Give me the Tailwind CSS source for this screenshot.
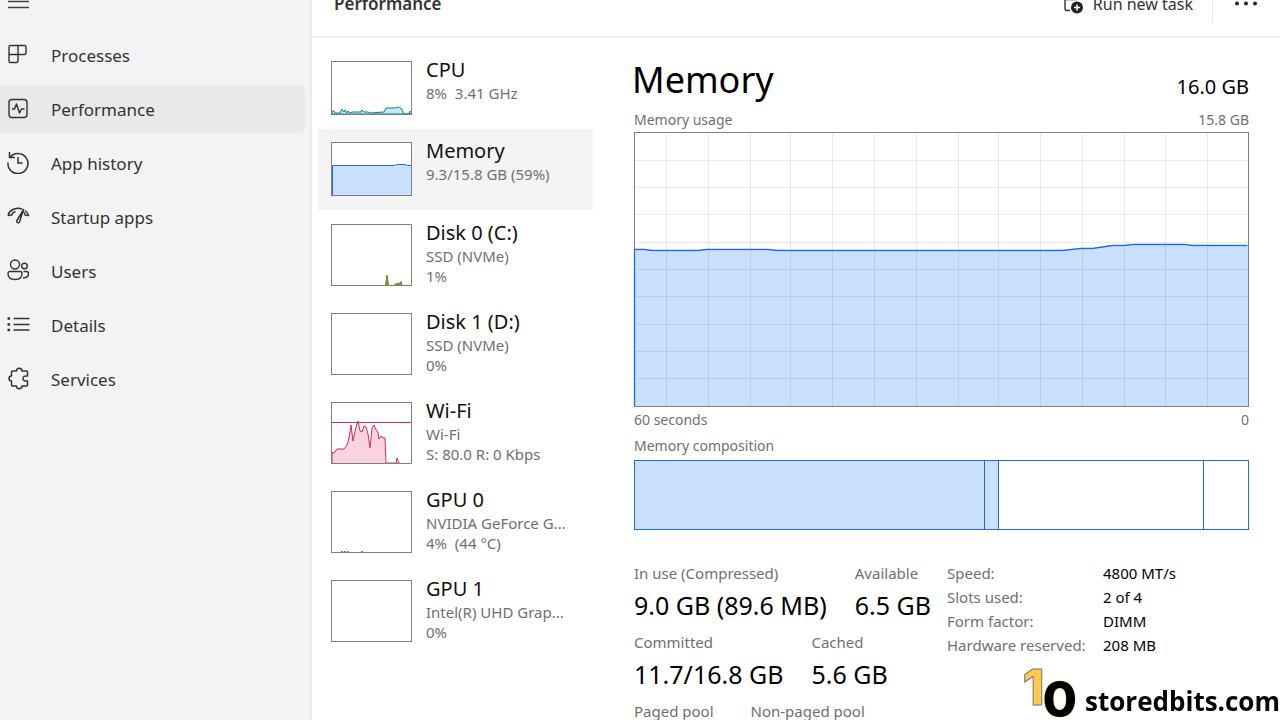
<!DOCTYPE html>
<html lang="en">
<head>
  <meta charset="UTF-8">
  <meta name="viewport" content="width=device-width, initial-scale=1.0">
  <title>Task Manager - Performance</title>
  <script src="https://cdn.jsdelivr.net/npm/@tailwindcss/browser@4"></script>
</head>
<body class="h-screen overflow-hidden bg-white font-['Noto_Sans','Open_Sans',sans-serif] text-[#1b1b1b]">
  <!-- The window is scrolled so that its title row is partly cut off -->
  <div class="flex min-h-[calc(100vh+29px)] -mt-[29px]">

    <!-- Sidebar -->
    <nav class="w-[312px] shrink-0 bg-[#f3f3f3] border-r-2 border-[#ebebeb] text-[17px] text-[#333]" aria-label="Main">
      <button class="flex items-center h-[66px] pl-2" aria-label="Toggle navigation">
        <svg class="w-[22px] h-[22px]" viewBox="0 0 22 22" fill="none" stroke="#444" stroke-width="1.5"><path d="M0 2.5h21M0 8.500h21M0 14.500h21"/></svg>
      </button>
      <ul class="flex flex-col gap-[6px] -mt-[6px] pr-[5px]">
        <li>
          <a href="#processes" class="flex items-center gap-[21px] h-12 pl-[7px] pt-[2px]">
            <svg class="w-[23px] h-[23px] -mt-1" viewBox="0 0 23 23" fill="none" stroke="#333" stroke-width="1.4"><path d="M3.500 2.500h14a1.500 1.500 0 0 1 1.500 1.500v6a1.500 1.500 0 0 1-1.500 1.500h-15.500M11 2.500v15.500a1.500 1.500 0 0 1-1.500 1.500h-6a1.500 1.500 0 0 1-1.500-1.500v-14a1.500 1.500 0 0 1 1.500-1.500"/></svg>
            Processes
          </a>
        </li>
        <li>
          <a href="#performance" aria-current="page" class="flex items-center gap-[21px] h-12 pl-[7px] pt-[2px] rounded-r-md bg-[#e9e9e9]">
            <svg class="w-[23px] h-[23px] -mt-1" viewBox="0 0 23 23" fill="none" stroke="#333" stroke-width="1.4" stroke-linejoin="round"><rect x="2" y="2.500" width="18" height="18" rx="3"/><path d="M5 12h2.500l2-5 3 9 2-4h3"/></svg>
            Performance
          </a>
        </li>
        <li>
          <a href="#history" class="flex items-center gap-[21px] h-12 pl-[7px] pt-[2px]">
            <svg class="w-[23px] h-[23px] -mt-1" viewBox="0 0 23 23" fill="none" stroke="#333" stroke-width="1.5"><path d="M2.500 1v5.500h5.500M3 6.500a10 10 0 1 1-2 5M11 6v6h4.500"/></svg>
            App history
          </a>
        </li>
        <li>
          <a href="#startup" class="flex items-center gap-[21px] h-12 pl-[7px] pt-[2px]">
            <svg class="w-[23px] h-[23px] -mt-1" viewBox="0 0 23 23" fill="none" stroke="#333" stroke-width="1.5" stroke-linejoin="round"><path d="M1 10.500q1-4 4-5.500 5-3 10-1M1 10.500l4-.500q0-2.500 3.500-3.500M18 5.500q3 2 3.500 5l-3.500-.500q0-2-1.500-3M16.500 4.500l-4 12.500a1.500 1.500 0 0 1-2.800-1z"/></svg>
            Startup apps
          </a>
        </li>
        <li>
          <a href="#users" class="flex items-center gap-[21px] h-12 pl-[7px] pt-[2px]">
            <svg class="w-[23px] h-[23px] -mt-1" viewBox="0 0 23 23" fill="none" stroke="#333" stroke-width="1.4"><circle cx="8" cy="5.500" r="4.500"/><circle cx="17.500" cy="7" r="2.800"/><path d="M3 12.500h10a2 2 0 0 1 2 2q0 6-7 6t-7-6a2 2 0 0 1 2-2zM16.500 12.500h3a2 2 0 0 1 2 2q0 4.500-5.500 4.500"/></svg>
            Users
          </a>
        </li>
        <li>
          <a href="#details" class="flex items-center gap-[21px] h-12 pl-[7px] pt-[2px]">
            <svg class="w-[23px] h-[23px] -mt-1" viewBox="0 0 23 23" fill="none" stroke="#333" stroke-width="1.5"><path d="M6.500 5.500h16M6.500 11.500h16M6.500 17h16"/><path stroke-width="2.600" d="M.500 5.500h2.600M.500 11.500h2.600M.500 17h2.600"/></svg>
            Details
          </a>
        </li>
        <li>
          <a href="#services" class="flex items-center gap-[21px] h-12 pl-[7px] pt-[2px]">
            <svg class="w-[23px] h-[23px] -mt-1" viewBox="0 0 23 23" fill="none" stroke="#333" stroke-width="1.5" stroke-linejoin="round"><path d="M5.500 4h4q0-2.700 2.700-2.700T15 4h4.500a1 1 0 0 1 1 1v4q-4.500-.500-4.500 2.500t4.500 2.500v4a1 1 0 0 1-1 1h-4.500q0 2.700-2.800 2.700T9.500 19h-4a1 1 0 0 1-1-1v-4q-2.500 0-2.500-2.500t2.500-2.500v-4a1 1 0 0 1 1-1z"/></svg>
            Services
          </a>
        </li>
      </ul>
    </nav>

    <main class="flex-1 min-w-0 flex flex-col">
      <!-- Title row -->
      <header class="flex items-center h-[67px] pl-[22px] pr-[22px] border-b-2 border-[#efefef]">
        <h1 class="text-[17px] font-semibold text-[#333]">Performance</h1>
        <button class="ml-auto flex items-center gap-[10px] text-[16px] text-[#333]">
          <svg class="w-[22px] h-[22px]" viewBox="0 0 22 22" fill="none"><path stroke="#333" stroke-width="1.400" d="M9 17.500h-3a2 2 0 0 1-2-2v-11a2 2 0 0 1 2-2h9a2 2 0 0 1 2 2v2M4 6.500h12"/><circle cx="16" cy="14.500" r="6" fill="#222"/><path stroke="#fff" stroke-width="1.500" d="M13 14.500h6M16 11.500v6"/></svg>
          Run new task
        </button>
        <span class="w-px h-9 ml-[19px] mr-[21px] bg-[#e8e8e8]"></span>
        <button aria-label="More options">
          <svg class="w-6 h-2" viewBox="0 0 24 8" fill="#222"><circle cx="3" cy="3.500" r="2"/><circle cx="12" cy="3.500" r="2"/><circle cx="21" cy="3.500" r="2"/></svg>
        </button>
      </header>

      <div class="flex pl-[6px] pr-[31px] pt-[10px]">
        <!-- Resource list -->
        <div class="w-[275px] shrink-0 flex flex-col text-left text-[15px] leading-5 text-[#707070]">
          <button class="flex gap-[14px] h-[81px] px-[13px] pt-[13px] text-left">
            <svg class="w-[81px] h-[54px] shrink-0 border border-[#808080]" viewBox="0 0 79 52"><path d="M0 52v-3l2 0 1 2h5l2-4 2 3 1-2 2 3 1-2 2 2 2-1h9l1-2 2 2h4l2 1 14-1 2-4h9l3-1 3 1 3 6h5l1-3v3z" fill="#c2e9f2" stroke="#11829b"/></svg>
            <span class="min-w-0 -mt-1">
              <span class="block text-[20px] leading-[26px] text-[#111]">CPU</span>
              <span class="block">8%&nbsp; 3.41 GHz</span>
            </span>
          </button>
          <button class="flex gap-[14px] h-[81px] px-[13px] pt-[13px] text-left bg-[#f4f4f4]">
            <svg class="w-[81px] h-[54px] shrink-0 border border-[#808080] bg-white" viewBox="0 0 79 52"><path d="M.5 53V22.500h62l2-1h9l2 1h5v31" fill="#c9dffe" stroke="#1f69e2"/></svg>
            <span class="min-w-0 -mt-1">
              <span class="block text-[20px] leading-[26px] text-[#111]">Memory</span>
              <span class="block">9.3/15.8 GB (59%)</span>
            </span>
          </button>
          <button class="flex gap-[14px] h-[89px] px-[13px] pt-[14px] text-left">
            <svg class="w-[81px] h-[62px] shrink-0 border border-[#808080]" viewBox="0 0 79 60"><path d="M53.500 60l1.500-10 1.500 10zM63 60v-1l4-.5 2-2 1 3.500z" fill="#7da03a" stroke="#5f8a1c"/></svg>
            <span class="min-w-0 -mt-1">
              <span class="block text-[20px] leading-[26px] text-[#111]">Disk 0 (C:)</span>
              <span class="block">SSD (NVMe)</span>
              <span class="block">1%</span>
            </span>
          </button>
          <button class="flex gap-[14px] h-[89px] px-[13px] pt-[14px] text-left">
            <svg class="w-[81px] h-[62px] shrink-0 border border-[#808080]" viewBox="0 0 79 60"></svg>
            <span class="min-w-0 -mt-1">
              <span class="block text-[20px] leading-[26px] text-[#111]">Disk 1 (D:)</span>
              <span class="block">SSD (NVMe)</span>
              <span class="block">0%</span>
            </span>
          </button>
          <button class="flex gap-[14px] h-[89px] px-[13px] pt-[14px] text-left">
            <svg class="w-[81px] h-[62px] shrink-0 border border-[#808080]" viewBox="0 0 79 60"><path d="M0 60v-11l2 1 3-4h7l3-4 2-7 2-13 2 16 3-14 2-6 2 10 2 1 2-6 2 1 2 7 2 14 2-20 2-3 2 5 2 2 1 7 2-3 2 2 2 0 1 25h10l1-5 2 5" fill="#f9d3dd" stroke="#c9305f" stroke-linejoin="round"/><path d="M0 19.500h79" stroke="#c9305f"/></svg>
            <span class="min-w-0 -mt-1">
              <span class="block text-[20px] leading-[26px] text-[#111]">Wi-Fi</span>
              <span class="block">Wi-Fi</span>
              <span class="block">S: 80.0 R: 0 Kbps</span>
            </span>
          </button>
          <button class="flex gap-[14px] h-[89px] px-[13px] pt-[14px] text-left">
            <svg class="w-[81px] h-[62px] shrink-0 border border-[#808080]" viewBox="0 0 79 60"><path d="M9 59.500h2M12 59.500h2M15 59.500h2M29 59.500h2" stroke="#9a5fd0"/></svg>
            <span class="min-w-0 -mt-1">
              <span class="block text-[20px] leading-[26px] text-[#111]">GPU 0</span>
              <span class="block">NVIDIA GeForce G...</span>
              <span class="block">4%&nbsp; (44 °C)</span>
            </span>
          </button>
          <button class="flex gap-[14px] h-[89px] px-[13px] pt-[14px] text-left">
            <svg class="w-[81px] h-[62px] shrink-0 border border-[#808080]" viewBox="0 0 79 60"></svg>
            <span class="min-w-0 -mt-1">
              <span class="block text-[20px] leading-[26px] text-[#111]">GPU 1</span>
              <span class="block">Intel(R) UHD Grap...</span>
              <span class="block">0%</span>
            </span>
          </button>
        </div>

        <!-- Memory details -->
        <section class="flex-1 min-w-0 ml-[41px] pt-[10px] text-[15px] leading-5 text-[#707070]">
          <div class="flex items-end justify-between pb-2 text-black">
            <h2 class="text-[36px] leading-[44px] -ml-[2px]">Memory</h2>
            <span class="text-[20px] leading-[30px]">16.0 GB</span>
          </div>
          <div class="flex justify-between text-[14px]"><span>Memory usage</span><span>15.8 GB</span></div>
          <svg class="block w-full h-[275px] mt-[2px] border border-[#808080] overflow-visible" viewBox="0 0 613 273" preserveAspectRatio="none" fill="none">
            <path d="M0 273V117.500h10l8 1h46l8-1h61l10 1h285l18-2 12 0 20-3h12l8-1h52l8 1h55V273z" fill="#c9dffe"/>
            <path d="M31.500 0v273M73.500 0v273M115.500 0v273M155.500 0v273M197.500 0v273M239.500 0v273M281.500 0v273M323.500 0v273M363.500 0v273M405.500 0v273M447.500 0v273M489.500 0v273M530.500 0v273M572.500 0v273M0 27.500h613M0 54.500h613M0 81.500h613M0 109.500h613M0 136.500h613M0 163.500h613M0 191.500h613M0 218.500h613M0 245.500h613" stroke="#000" stroke-opacity=".08"/>
            <path d="M-.5 273V116.500h10l8 1h46l8-1h61l10 1h285l18-2 12 0 20-3h12l8-1h52l8 1h55" stroke="#1f69e2" stroke-width="1.300"/>
          </svg>
          <div class="flex justify-between mt-[3px] text-[14px]"><span>60 seconds</span><span>0</span></div>
          <div class="mt-[6px] text-[14px]">Memory composition</div>
          <div class="flex h-[70px] mt-[4px] border border-[#1f69e2]">
            <div class="bg-[#c9dffe] border-r border-[#1f69e2]" style="width: 57.1%"></div>
            <div class="bg-[#c9dffe] border-r border-[#1f69e2]" style="width: 2.2%"></div>
            <div class="border-r border-[#1f69e2]" style="width: 33.5%"></div>
          </div>

          <div class="flex mt-[33px]">
            <div class="w-[313px] shrink-0 flex flex-col gap-y-[5px]">
              <dl class="flex gap-[28px] whitespace-nowrap">
                <div><dt>In use (Compressed)</dt><dd class="text-[25px] leading-[44px] text-black">9.0 GB (89.6 MB)</dd></div>
                <div><dt>Available</dt><dd class="text-[25px] leading-[44px] text-black">6.5 GB</dd></div>
              </dl>
              <dl class="flex gap-[28px] whitespace-nowrap">
                <div><dt>Committed</dt><dd class="text-[25px] leading-[44px] text-black">11.7/16.8 GB</dd></div>
                <div><dt>Cached</dt><dd class="text-[25px] leading-[44px] text-black">5.6 GB</dd></div>
              </dl>
              <dl class="flex gap-[37px] whitespace-nowrap">
                <div><dt>Paged pool</dt></div>
                <div><dt>Non-paged pool</dt></div>
              </dl>
            </div>
            <table class="self-start -mt-[2px] text-left leading-6 whitespace-nowrap">
              <tbody>
                <tr><th class="w-[156px] p-0 font-normal">Speed:</th><td class="p-0 text-black">4800 MT/s</td></tr>
                <tr><th class="p-0 font-normal">Slots used:</th><td class="p-0 text-black">2 of 4</td></tr>
                <tr><th class="p-0 font-normal">Form factor:</th><td class="p-0 text-black">DIMM</td></tr>
                <tr><th class="p-0 font-normal">Hardware reserved:</th><td class="p-0 text-black">208 MB</td></tr>
              </tbody>
            </table>
          </div>
        </section>
      </div>
    </main>
  </div>

  <!-- Site watermark -->
  <div class="fixed right-0 bottom-0 flex items-end font-['Open_Sans',sans-serif] font-bold text-black">
    <span class="flex font-['Inter',sans-serif] text-[50px] leading-[42px] font-extrabold mr-2" aria-hidden="true">
      <span class="pb-3 text-[#ffc84f] [-webkit-text-stroke:1px_#777]">1</span>
      <span class="relative -ml-[2px] self-end [text-shadow:0_0_2px_#ffc84f]">0</span>
    </span>
    <span class="text-[26px] leading-[38px]">storedbits.com</span>
  </div>
</body>
</html>
